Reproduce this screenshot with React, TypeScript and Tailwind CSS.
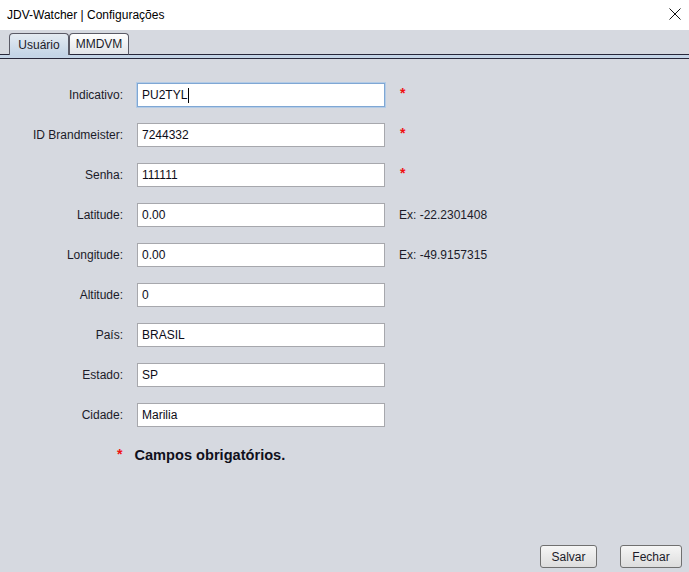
import React from 'react';

const fields = [
  { label: 'Indicativo:', value: 'PU2TYL', required: true, focused: true },
  { label: 'ID Brandmeister:', value: '7244332', required: true },
  { label: 'Senha:', value: '111111', required: true },
  { label: 'Latitude:', value: '0.00', hint: 'Ex: -22.2301408' },
  { label: 'Longitude:', value: '0.00', hint: 'Ex: -49.9157315' },
  { label: 'Altitude:', value: '0' },
  { label: 'País:', value: 'BRASIL' },
  { label: 'Estado:', value: 'SP' },
  { label: 'Cidade:', value: 'Marilia' },
];

const App = () => {
  return (
    <div className="w-[689px] h-[572px] flex flex-col bg-[#d6d9e0] font-['Liberation_Sans',Arial,sans-serif] text-[12px] text-[#1b1b29] overflow-hidden">
      {/* title bar */}
      <div className="h-[30px] shrink-0 bg-white flex items-center justify-between pl-[7px] pr-[8px]">
        <span className="text-[12px] text-black">JDV-Watcher | Configurações</span>
        <svg width="12" height="12" viewBox="0 0 12 12" className="mb-[2px]">
          <path d="M0.5 0.5 L11.5 11.5 M11.5 0.5 L0.5 11.5" stroke="#111" strokeWidth="1" />
        </svg>
      </div>

      {/* tabs */}
      <div className="mt-[3px] h-[22px] flex items-end shrink-0">
        <div className="w-[9px] h-full border-b border-[#27273a]" />
        <div className="h-[22px] w-[60px] flex items-center justify-center rounded-t-[4px] border-l border-t border-r border-[#5a5a66] bg-gradient-to-b from-[#e4ebf2] to-[#c4d4e6] text-[#1b1b29] pt-[1px]">
          Usuário
        </div>
        <div className="h-[22px] w-[60px] flex items-center justify-center rounded-t-[4px] border border-[#5a5a66] border-b-[#27273a] bg-gradient-to-b from-[#ffffff] to-[#e2e4e8] text-[#1b1b29]">
          MMDVM
        </div>
        <div className="flex-1 h-full border-b border-[#27273a]" />
      </div>
      <div className="h-[3px] shrink-0 bg-[#c4d4e6]" />
      <div className="h-px shrink-0 bg-[#27273a]" />

      {/* form */}
      <div className="flex flex-col gap-[16px] pt-[24px]">
        {fields.map((f) => (
          <div key={f.label} className="flex items-center h-[24px]">
            <div className="w-[123px] text-right">{f.label}</div>
            <div
              className={`ml-[14px] w-[248px] h-[24px] bg-white flex items-center pl-[4px] text-[#0c0c18] ${
                f.focused
                  ? 'border border-[#7fa7d4] shadow-[0_0_0_1px_#b3cbe6]'
                  : 'border border-[#a7a8ad]'
              }`}
            >
              {f.value}
              {f.focused && <span className="inline-block w-px h-[15px] bg-black ml-[1px]" />}
            </div>
            {f.required && <span className="ml-[15px] text-[#f01010] text-[14px] font-bold -mt-[4px]">*</span>}
            {f.hint && <span className="ml-[14px]">{f.hint}</span>}
          </div>
        ))}

        <div className="flex items-center h-[20px] mt-[3px] pl-[117px]">
          <span className="text-[#f01010] text-[14px] font-bold -mt-[4px]">*</span>
          <span className="ml-[12px] text-[14.6px] font-bold text-[#10101c]">Campos obrigatórios.</span>
        </div>
      </div>

      {/* buttons */}
      <div className="mt-auto flex justify-end gap-[23px] pr-[7px] pb-[4px]">
        <button className="w-[57px] h-[23px] rounded-[3px] border border-[#707070] bg-gradient-to-b from-[#f6f6f6] to-[#dddddd] text-[12px] text-[#1b1b29]">
          Salvar
        </button>
        <button className="w-[62px] h-[23px] rounded-[3px] border border-[#707070] bg-gradient-to-b from-[#f6f6f6] to-[#dddddd] text-[12px] text-[#1b1b29]">
          Fechar
        </button>
      </div>
    </div>
  );
};

export default App;
